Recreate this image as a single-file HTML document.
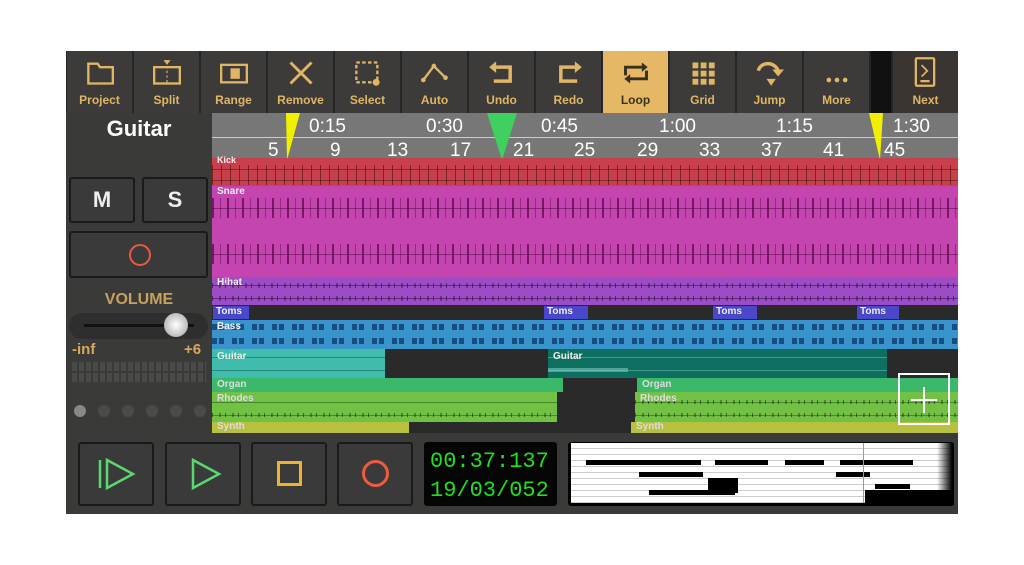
<!DOCTYPE html>
<html><head><meta charset="utf-8"><style>
*{margin:0;padding:0;box-sizing:border-box}
body{width:1024px;height:565px;background:#fff;position:relative;overflow:hidden;font-family:"Liberation Sans",sans-serif}
.a{position:absolute}
.tb{position:absolute;top:51px;height:62px;width:65px;background:#3c3b39;color:#e0b664;font-weight:bold;font-size:12px;text-align:center}
.tb span{position:absolute;bottom:6px;left:0;right:0}
.tb svg{position:absolute;left:17px;top:8px}
.lbl{position:absolute;color:#eee;font-size:10px;font-weight:bold;left:5px;top:0}
.wave{position:absolute;left:0;right:0;height:2px;background:repeating-linear-gradient(90deg,rgba(0,0,0,.45) 0 1px,transparent 1px 7px,rgba(0,0,0,.3) 7px 9px,transparent 9px 13px)}
.cl{position:absolute;left:0;right:0;height:1px;background:rgba(0,0,0,.35)}
.num{position:absolute;color:#fff;font-size:19px}
.btn{position:absolute;background:#3a3a3a;border:2px solid #1a1a1a;border-radius:3px}
</style></head><body>
<div class="a" style="left:66px;top:51px;width:892px;height:463px;background:#262626"></div>
<!-- toolbar -->
<div class="tb" style="left:67px"><svg width="32" height="28" viewBox="0 0 26 24"><path d="M3 4h8l2 3h11v14H3z" fill="none" stroke="#e0b664" stroke-width="2"/></svg><span>Project</span></div>
<div class="tb" style="left:134px"><svg width="32" height="28" viewBox="0 0 26 24"><rect x="2" y="7" width="22" height="14" fill="none" stroke="#e0b664" stroke-width="2"/><path d="M13 6v16" stroke="#e0b664" stroke-dasharray="2 2"/><path d="M10 1h6l-3 4z" fill="#e0b664"/></svg><span>Split</span></div>
<div class="tb" style="left:201px"><svg width="32" height="28" viewBox="0 0 26 24"><rect x="2" y="5" width="22" height="15" fill="none" stroke="#e0b664" stroke-width="2"/><rect x="10" y="8" width="8" height="9" fill="#e0b664"/></svg><span>Range</span></div>
<div class="tb" style="left:268px"><svg width="32" height="28" viewBox="0 0 26 24"><path d="M4 3l18 18M22 3L4 21" stroke="#e0b664" stroke-width="2.5"/></svg><span>Remove</span></div>
<div class="tb" style="left:335px"><svg width="32" height="28" viewBox="0 0 26 24"><rect x="3" y="3" width="18" height="17" fill="none" stroke="#e0b664" stroke-width="2" stroke-dasharray="3 2"/><circle cx="20" cy="20" r="3" fill="#e0b664"/></svg><span>Select</span></div>
<div class="tb" style="left:402px"><svg width="32" height="28" viewBox="0 0 26 24"><path d="M3 18l9-12 10 10" fill="none" stroke="#e0b664" stroke-width="2"/><circle cx="3" cy="18" r="2" fill="#e0b664"/><circle cx="12" cy="6" r="2" fill="#e0b664"/><circle cx="22" cy="16" r="2" fill="#e0b664"/></svg><span>Auto</span></div>
<div class="tb" style="left:469px"><svg width="32" height="28" viewBox="0 0 26 24"><path d="M6 7h14v12H6" fill="none" stroke="#e0b664" stroke-width="3"/><path d="M2 7l6-5v10z" fill="#e0b664"/></svg><span>Undo</span></div>
<div class="tb" style="left:536px"><svg width="32" height="28" viewBox="0 0 26 24"><path d="M20 7H6v12h14" fill="none" stroke="#e0b664" stroke-width="3"/><path d="M24 7l-6-5v10z" fill="#e0b664"/></svg><span>Redo</span></div>
<div class="tb" style="left:603px;background:#e5b865;color:#3a3020"><svg width="32" height="28" viewBox="0 0 26 24"><path d="M4 14V7h16M22 10v7H6" fill="none" stroke="#3a3020" stroke-width="2.5"/><path d="M18 3l5 4-5 4zM8 13l-5 4 5 4z" fill="#3a3020"/></svg><span>Loop</span></div>
<div class="tb" style="left:670px"><svg width="32" height="28" viewBox="0 0 26 24"><g fill="#e0b664"><rect x="4" y="3" width="5" height="5"/><rect x="11" y="3" width="5" height="5"/><rect x="18" y="3" width="5" height="5"/><rect x="4" y="10" width="5" height="5"/><rect x="11" y="10" width="5" height="5"/><rect x="18" y="10" width="5" height="5"/><rect x="4" y="17" width="5" height="5"/><rect x="11" y="17" width="5" height="5"/><rect x="18" y="17" width="5" height="5"/></g></svg><span>Grid</span></div>
<div class="tb" style="left:737px"><svg width="32" height="28" viewBox="0 0 26 24"><path d="M3 10c2-8 14-8 17 0" fill="none" stroke="#e0b664" stroke-width="3"/><path d="M15 9h10l-5 6zM10 17h8l-4 6z" fill="#e0b664"/></svg><span>Jump</span></div>
<div class="tb" style="left:804px"><svg width="32" height="28" viewBox="0 0 26 24"><g fill="#e0b664"><circle cx="6" cy="18" r="2"/><circle cx="13" cy="18" r="2"/><circle cx="20" cy="18" r="2"/></g></svg><span>More</span></div>
<div class="a" style="left:871px;top:51px;width:20px;height:62px;background:#111"></div>
<div class="tb" style="left:893px;background:#3a3531"><svg width="30" height="32" viewBox="0 0 26 28" style="top:5px"><rect x="5" y="2" width="16" height="24" rx="1" fill="none" stroke="#e0b664" stroke-width="2"/><path d="M10 8l5 5-5 5" fill="none" stroke="#e0b664" stroke-width="1.5"/><rect x="9" y="21" width="8" height="2" fill="#e0b664"/></svg><span>Next</span></div>
<!-- left panel -->
<div class="a" style="left:66px;top:113px;width:146px;height:320px;background:#3a3a38"></div>
<div class="a" style="left:66px;top:116px;width:146px;text-align:center;color:#fff;font-size:22px;font-weight:bold">Guitar</div>
<div class="btn" style="left:69px;top:177px;width:66px;height:46px;color:#eee;font-size:22px;font-weight:bold;text-align:center;line-height:42px">M</div>
<div class="btn" style="left:142px;top:177px;width:66px;height:46px;color:#eee;font-size:22px;font-weight:bold;text-align:center;line-height:42px">S</div>
<div class="btn" style="left:69px;top:231px;width:139px;height:47px"><div class="a" style="left:58px;top:11px;width:22px;height:22px;border:2px solid #e85a40;border-radius:50%"></div></div>
<div class="a" style="left:66px;top:291px;width:146px;text-align:center;color:#c8a060;font-size:16px;font-weight:bold">VOLUME</div>
<div class="a" style="left:69px;top:313px;width:139px;height:26px;background:#2e2e2e;border-radius:13px"></div>
<div class="a" style="left:84px;top:324px;width:110px;height:3px;background:#111"></div>
<div class="a" style="left:164px;top:313px;width:24px;height:24px;border-radius:50%;background:radial-gradient(#fff,#bbb 70%,#888)"></div>
<div class="a" style="left:72px;top:341px;color:#d8a860;font-size:15px;font-weight:bold">-inf</div>
<div class="a" style="left:184px;top:341px;color:#d8a860;font-size:15px;font-weight:bold">+6</div>
<div class="a" style="left:72px;top:362px;width:134px;height:20px;background:repeating-linear-gradient(90deg,#4a4a48 0 5px,#3a3a38 5px 7px)"></div>
<div class="a" style="left:72px;top:371px;width:134px;height:2px;background:#3a3a38"></div>
<div class="a" style="left:72px;top:403px"><svg width="140" height="18"><circle cx="8" cy="8" r="6" fill="#888"/><circle cx="32" cy="8" r="6" fill="#4a4a48"/><circle cx="56" cy="8" r="6" fill="#4a4a48"/><circle cx="80" cy="8" r="6" fill="#4a4a48"/><circle cx="104" cy="8" r="6" fill="#4a4a48"/><circle cx="128" cy="8" r="6" fill="#4a4a48"/></svg></div>
<!-- ruler -->
<div class="a" style="left:212px;top:113px;width:746px;height:45px;background:#777"></div>
<div class="a" style="left:212px;top:137px;width:746px;height:1px;background:#ccc"></div>
<div class="num" style="left:309px;top:116px">0:15</div><div class="num" style="left:426px;top:116px">0:30</div><div class="num" style="left:541px;top:116px">0:45</div><div class="num" style="left:659px;top:116px">1:00</div><div class="num" style="left:776px;top:116px">1:15</div><div class="num" style="left:893px;top:116px">1:30</div>
<div class="num" style="left:268px;top:140px">5</div><div class="num" style="left:330px;top:140px">9</div><div class="num" style="left:387px;top:140px">13</div><div class="num" style="left:450px;top:140px">17</div><div class="num" style="left:513px;top:140px">21</div><div class="num" style="left:574px;top:140px">25</div><div class="num" style="left:637px;top:140px">29</div><div class="num" style="left:699px;top:140px">33</div><div class="num" style="left:761px;top:140px">37</div><div class="num" style="left:823px;top:140px">41</div><div class="num" style="left:884px;top:140px">45</div>
<svg class="a" style="left:212px;top:113px" width="746" height="48"><path d="M74 0h14L75 47z" fill="#f0f000"/><path d="M275 0h30L290 47z" fill="#40d060"/><path d="M657 0h14l-3 47z" fill="#f0f000"/></svg>
<!-- tracks -->
<div class="a" style="left:212px;top:158px;width:746px;height:28px;background:#c8404c"><div class="lbl" style="top:-3px;font-size:9px">Kick</div><div class="cl" style="top:11px"></div><div class="cl" style="top:22px"></div><div class="wave" style="top:7px;background:repeating-linear-gradient(90deg,rgba(60,0,0,.5) 0 1px,transparent 1px 9px);height:20px"></div></div>
<div class="a" style="left:212px;top:186px;width:746px;height:91px;background:#c444b0"><div class="lbl">Snare</div><div class="cl" style="top:22px;background:rgba(80,0,60,.5)"></div><div class="cl" style="top:68px;background:rgba(80,0,60,.5)"></div><div class="wave" style="top:12px;height:20px;background:repeating-linear-gradient(90deg,rgba(80,0,60,.65) 0 2px,transparent 2px 8px,rgba(80,0,60,.4) 8px 9px,transparent 9px 15px)"></div><div class="wave" style="top:58px;height:20px;background:repeating-linear-gradient(90deg,rgba(80,0,60,.65) 0 2px,transparent 2px 8px,rgba(80,0,60,.4) 8px 9px,transparent 9px 15px)"></div></div>
<div class="a" style="left:212px;top:277px;width:746px;height:28px;background:#9c4cc4"><div class="lbl">Hihat</div><div class="cl" style="top:8px;background:rgba(50,0,80,.5)"></div><div class="cl" style="top:21px;background:rgba(50,0,80,.5)"></div><div class="wave" style="top:6px;height:5px"></div><div class="wave" style="top:19px;height:5px"></div></div>
<div class="a" style="left:212px;top:305px;width:746px;height:15px;background:#2a2a2a"></div>
<div class="a" style="left:213px;top:306px;width:36px;height:13px;background:#4a48c8;color:#eee;font-size:10px;font-weight:bold;padding-left:3px">Toms</div>
<div class="a" style="left:544px;top:306px;width:44px;height:13px;background:#4a48c8;color:#eee;font-size:10px;font-weight:bold;padding-left:3px">Toms</div>
<div class="a" style="left:713px;top:306px;width:44px;height:13px;background:#4a48c8;color:#eee;font-size:10px;font-weight:bold;padding-left:3px">Toms</div>
<div class="a" style="left:857px;top:306px;width:42px;height:13px;background:#4a48c8;color:#eee;font-size:10px;font-weight:bold;padding-left:3px">Toms</div>
<div class="a" style="left:212px;top:320px;width:746px;height:29px;background:#3a94cc"><div class="wave" style="top:4px;height:6px;background:repeating-linear-gradient(90deg,rgba(0,30,80,.6) 0 5px,transparent 5px 7px,rgba(0,30,80,.6) 7px 12px,transparent 12px 20px)"></div><div class="wave" style="top:18px;height:6px;background:repeating-linear-gradient(90deg,rgba(0,30,80,.6) 0 5px,transparent 5px 7px,rgba(0,30,80,.6) 7px 12px,transparent 12px 20px)"></div><div class="lbl" style="top:1px">Bass</div></div>
<div class="a" style="left:212px;top:349px;width:746px;height:29px;background:#2a2a2a"></div>
<div class="a" style="left:212px;top:349px;width:173px;height:29px;background:#40bcac"><div class="cl" style="top:8px;background:rgba(0,60,50,.4)"></div><div class="cl" style="top:21px;background:rgba(0,60,50,.4)"></div><div class="lbl" style="top:2px">Guitar</div></div>
<div class="a" style="left:548px;top:349px;width:339px;height:29px;background:#0e6e60"><div class="cl" style="top:8px;background:rgba(120,200,190,.5)"></div><div class="cl" style="top:21px;background:rgba(120,200,190,.5)"></div><div class="a" style="left:0;top:19px;width:80px;height:4px;background:rgba(120,200,190,.6)"></div><div class="lbl" style="top:2px">Guitar</div></div>
<div class="a" style="left:212px;top:378px;width:746px;height:14px;background:#2a2a2a"></div>
<div class="a" style="left:212px;top:378px;width:351px;height:14px;background:#3cb86a"><div class="lbl" style="top:1px;color:#ddd">Organ</div></div>
<div class="a" style="left:637px;top:378px;width:321px;height:14px;background:#3cb86a"><div class="lbl" style="top:1px;color:#ddd">Organ</div></div>
<div class="a" style="left:212px;top:392px;width:746px;height:30px;background:#2a2a2a"></div>
<div class="a" style="left:212px;top:392px;width:345px;height:30px;background:#72c044"><div class="cl" style="top:10px;background:rgba(0,60,0,.4)"></div><div class="cl" style="top:23px;background:rgba(0,60,0,.4)"></div><div class="wave" style="top:21px;height:4px"></div><div class="lbl" style="top:1px;color:#ddd">Rhodes</div></div>
<div class="a" style="left:635px;top:392px;width:323px;height:30px;background:#72c044"><div class="cl" style="top:10px;background:rgba(0,60,0,.4)"></div><div class="cl" style="top:23px;background:rgba(0,60,0,.4)"></div><div class="wave" style="top:8px;height:4px"></div><div class="wave" style="top:21px;height:4px"></div><div class="lbl" style="top:1px;color:#ddd">Rhodes</div></div>
<div class="a" style="left:212px;top:422px;width:746px;height:11px;background:#2a2a2a"></div>
<div class="a" style="left:212px;top:422px;width:197px;height:11px;background:#b8c040;overflow:hidden"><div class="lbl" style="top:-1px;color:#ddd">Synth</div></div>
<div class="a" style="left:631px;top:422px;width:327px;height:11px;background:#b8c040;overflow:hidden"><div class="lbl" style="top:-1px;color:#ddd">Synth</div></div>
<div class="a" style="left:898px;top:373px;width:52px;height:52px;border:2px solid #fff"><div class="a" style="left:11px;top:24px;width:26px;height:2px;background:#fff"></div><div class="a" style="left:23px;top:12px;width:2px;height:26px;background:#fff"></div></div>
<!-- bottom bar -->
<div class="a" style="left:66px;top:433px;width:892px;height:81px;background:#3a3a38"></div>
<div class="btn" style="left:78px;top:442px;width:76px;height:64px"><svg width="72" height="60"><path d="M20 16v28" stroke="#5ad870" stroke-width="2.5"/><path d="M27 16l26 14-26 14z" fill="none" stroke="#5ad870" stroke-width="2.5"/></svg></div>
<div class="btn" style="left:165px;top:442px;width:76px;height:64px"><svg width="72" height="60"><path d="M26 16l26 14-26 14z" fill="none" stroke="#5ad870" stroke-width="2.5"/></svg></div>
<div class="btn" style="left:251px;top:442px;width:76px;height:64px"><div class="a" style="left:24px;top:17px;width:25px;height:25px;border:3px solid #f0b030"></div></div>
<div class="btn" style="left:337px;top:442px;width:76px;height:64px"><div class="a" style="left:23px;top:16px;width:27px;height:27px;border:3px solid #ef5a40;border-radius:50%"></div></div>
<div class="a" style="left:424px;top:442px;width:133px;height:64px;background:#050505;border-radius:3px;color:#20e020;font-family:'Liberation Mono',monospace;font-size:22px;line-height:29px;padding:5px 0 0 6px">00:37:137<br>19/03/052</div>
<div class="a" style="left:568px;top:442px;width:386px;height:64px;background:#000;border-radius:3px"></div>
<div class="a" style="left:571px;top:443px;width:381px;height:60px;background:repeating-linear-gradient(180deg,#fff 0 5px,#ccc 5px 6px)"></div>
<div class="a" style="left:586px;top:460px;width:115px;height:5px;background:#000"></div><div class="a" style="left:715px;top:460px;width:53px;height:5px;background:#000"></div><div class="a" style="left:785px;top:460px;width:39px;height:5px;background:#000"></div><div class="a" style="left:840px;top:460px;width:73px;height:5px;background:#000"></div>
<div class="a" style="left:639px;top:472px;width:64px;height:5px;background:#000"></div><div class="a" style="left:836px;top:472px;width:34px;height:5px;background:#000"></div>
<div class="a" style="left:708px;top:478px;width:30px;height:15px;background:#000"></div><div class="a" style="left:875px;top:484px;width:35px;height:5px;background:#000"></div>
<div class="a" style="left:649px;top:490px;width:86px;height:5px;background:#000"></div>
<div class="a" style="left:865px;top:490px;width:89px;height:15px;background:#000"></div>
<div class="a" style="left:937px;top:443px;width:15px;height:50px;background:linear-gradient(90deg,transparent,#000)"></div>
<div class="a" style="left:863px;top:443px;width:1px;height:60px;background:#d09040"></div>
</body></html>
